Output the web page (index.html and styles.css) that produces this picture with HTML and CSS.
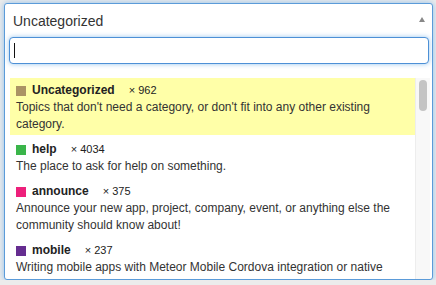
FILE: index.html
```html
<!DOCTYPE html>
<html lang="en">

<head>
  <meta charset="UTF-8">
  <meta name="viewport" content="width=device-width, initial-scale=1.0">
  <title>Category chooser</title>
  <link rel="stylesheet" href="styles.css">
</head>

<body>
  <div class="chooser">
    <div class="chosen">
      <span class="chosen-name">Uncategorized</span>
      <span class="arrow"></span>
    </div>
    <div class="search">
      <input type="text" class="search-input">
      <span class="caret"></span>
    </div>
    <div class="results">
      <ul class="result-list">
        <li class="result highlighted">
          <div class="result-head">
            <span class="swatch" style="background:#ab9364"></span>
            <span class="cat-name">Uncategorized</span>
            <span class="topic-count">&times; 962</span>
          </div>
          <div class="cat-desc">Topics that don't need a category, or don't fit into any other existing category.</div>
        </li>
        <li class="result">
          <div class="result-head">
            <span class="swatch" style="background:#3ab54a"></span>
            <span class="cat-name">help</span>
            <span class="topic-count">&times; 4034</span>
          </div>
          <div class="cat-desc">The place to ask for help on something.</div>
        </li>
        <li class="result">
          <div class="result-head">
            <span class="swatch" style="background:#ed207b"></span>
            <span class="cat-name">announce</span>
            <span class="topic-count">&times; 375</span>
          </div>
          <div class="cat-desc">Announce your new app, project, company, event, or anything else the community should know about!</div>
        </li>
        <li class="result">
          <div class="result-head">
            <span class="swatch" style="background:#652d90"></span>
            <span class="cat-name">mobile</span>
            <span class="topic-count">&times; 237</span>
          </div>
          <div class="cat-desc">Writing mobile apps with Meteor Mobile Cordova integration or native</div>
        </li>
      </ul>
      <div class="scroll-track">
        <div class="scroll-thumb"></div>
      </div>
    </div>
  </div>
</body>

</html>
```

FILE: styles.css
```css
body {
  background-color: #ececec;
  font-family: 'Liberation Sans', Arial, Helvetica, sans-serif;
  margin: 0;
  padding: 3px 3px 0 4px;
  color: #333;
}

.chooser {
  box-sizing: border-box;
  width: 429px;
  height: 277px;
  background: #fff;
  border: 1px solid #5b9bd9;
  border-radius: 3px;
  box-shadow: 0 0 6px rgba(82, 160, 230, 0.6);
  display: flex;
  flex-direction: column;
  overflow: hidden;
}

/* Current choice */
.chosen {
  height: 29px;
  padding: 2px 7px 0 8px;
  display: flex;
  align-items: center;
  justify-content: space-between;
  font-size: 14px;
  color: #333;
}

.arrow {
  width: 0;
  height: 0;
  border-left: 3px solid transparent;
  border-right: 3px solid transparent;
  border-bottom: 5px solid #888;
  margin-top: -2px;
}

.search {
  position: relative;
  padding: 2px 3px 0 4px;
}

.search-input {
  box-sizing: border-box;
  display: block;
  width: 100%;
  height: 27px;
  margin: 0;
  padding: 0 6px;
  border: 1px solid #4d90d6;
  border-radius: 4px;
  box-shadow: 0 0 5px rgba(82, 160, 230, 0.6);
  font-family: inherit;
  font-size: 14px;
  outline: none;
}

/* blinking text cursor, frozen on */
.caret {
  position: absolute;
  left: 9px;
  top: 8px;
  width: 1px;
  height: 15px;
  background: #111;
}

/* Result list */
.results {
  flex: 1;
  display: flex;
  margin: 14px 2px 0 5px;
  overflow: hidden;
}

.result-list {
  flex: 1;
  list-style: none;
  margin: 0;
  padding: 0;
}

.result {
  padding: 3px 6px 2px;
  margin-bottom: 2px;
}

.result.highlighted {
  background-color: #ffffa8;
}

.result-head {
  height: 18px;
  display: flex;
  align-items: center;
}

.swatch {
  width: 10px;
  height: 10px;
  margin-right: 6px;
  margin-top: 1px;
}

.cat-name {
  font-weight: bold;
  font-size: 12px;
  color: #222;
}

.topic-count {
  font-size: 11px;
  color: #222;
  margin-left: 14px;
}

.cat-desc {
  font-size: 12px;
  line-height: 17px;
  color: #333;
}

.scroll-track {
  width: 15px;
  background: #f8f8f8;
  border-left: 1px solid #ededed;
  box-sizing: border-box;
  padding: 2px 3px 0 3px;
}

.scroll-thumb {
  height: 31px;
  background: #c4c4c4;
  border-radius: 4px;
}
```
